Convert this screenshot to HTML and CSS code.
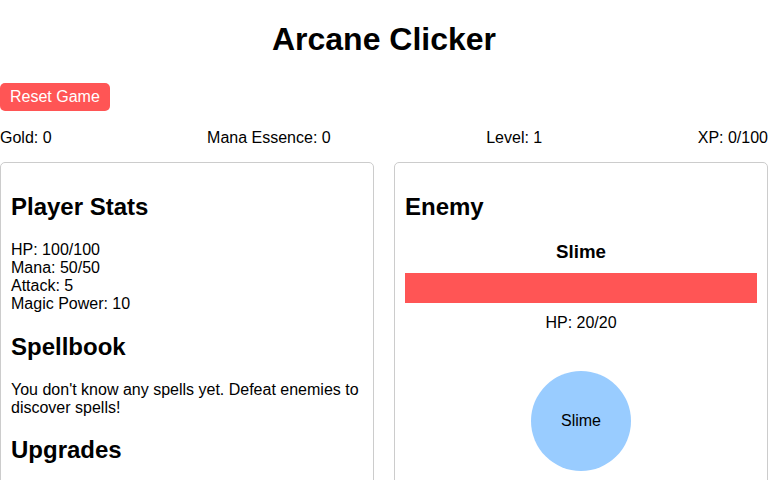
FILE: index.html
```html
<!DOCTYPE html>
<html>
<head>
<meta charset="utf-8">
<link rel="stylesheet" href="styles.css">
</head>
<body>
<h1 class="title">Arcane Clicker</h1>
<div class="controls"><button class="reset-btn">Reset Game</button></div>
<div class="resources">
  <div>Gold: 0</div>
  <div>Mana Essence: 0</div>
  <div>Level: 1</div>
  <div>XP: 0/100</div>
</div>
<div class="panels">
  <div class="panel">
    <h2>Player Stats</h2>
    <div class="stats">
      <div>HP: 100/100</div>
      <div>Mana: 50/50</div>
      <div>Attack: 5</div>
      <div>Magic Power: 10</div>
    </div>
    <h2>Spellbook</h2>
    <p class="spells">You don't know any spells yet. Defeat enemies to discover spells!</p>
    <h2>Upgrades</h2>
  </div>
  <div class="panel">
    <h2>Enemy</h2>
    <div class="enemy">
      <h3 class="enemy-name">Slime</h3>
      <div class="hp-bar"><div class="hp-fill" style="width: 100%"></div></div>
      <div class="hp-text">HP: 20/20</div>
      <div class="enemy-sprite">Slime</div>
    </div>
  </div>
</div>
</body>
</html>
```

FILE: styles.css
```css
body {
  margin: 0;
  font-family: "Liberation Sans", Arial, sans-serif;
  font-size: 16px;
  color: #000;
  background: #fff;
}
.title {
  text-align: center;
  font-size: 32px;
  margin: 21.44px 0;
}
.controls {
  padding-top: 3px;
}
.reset-btn {
  font-family: "Liberation Sans", Arial, sans-serif;
  font-size: 16px;
  background: #ff5555;
  color: #fff;
  border: none;
  border-radius: 5px;
  padding: 5px 10px;
  margin: 0;
  line-height: 18px;
}
.resources {
  display: flex;
  justify-content: space-between;
  margin: 18px 0 15px;
}
.panels {
  display: grid;
  grid-template-columns: 1fr 1fr;
  gap: 20px;
}
.panel {
  border: 1px solid #ccc;
  border-radius: 5px;
  padding: 10px;
  height: 400px;
}
.panel h2 {
  font-size: 24px;
  margin: 19.92px 0;
}
.spells {
  margin: 16px 0;
}
.enemy {
  text-align: center;
}
.enemy-name {
  font-size: 18.72px;
  margin: 18.72px 0 10px;
}
.hp-bar {
  height: 30px;
  background: #ddd;
}
.hp-fill {
  height: 100%;
  background: #ff5555;
}
.hp-text {
  margin-top: 11px;
}
.enemy-sprite {
  width: 100px;
  height: 100px;
  border-radius: 50%;
  background: #99ccff;
  margin: 39px auto 0;
  display: flex;
  align-items: center;
  justify-content: center;
}
```
